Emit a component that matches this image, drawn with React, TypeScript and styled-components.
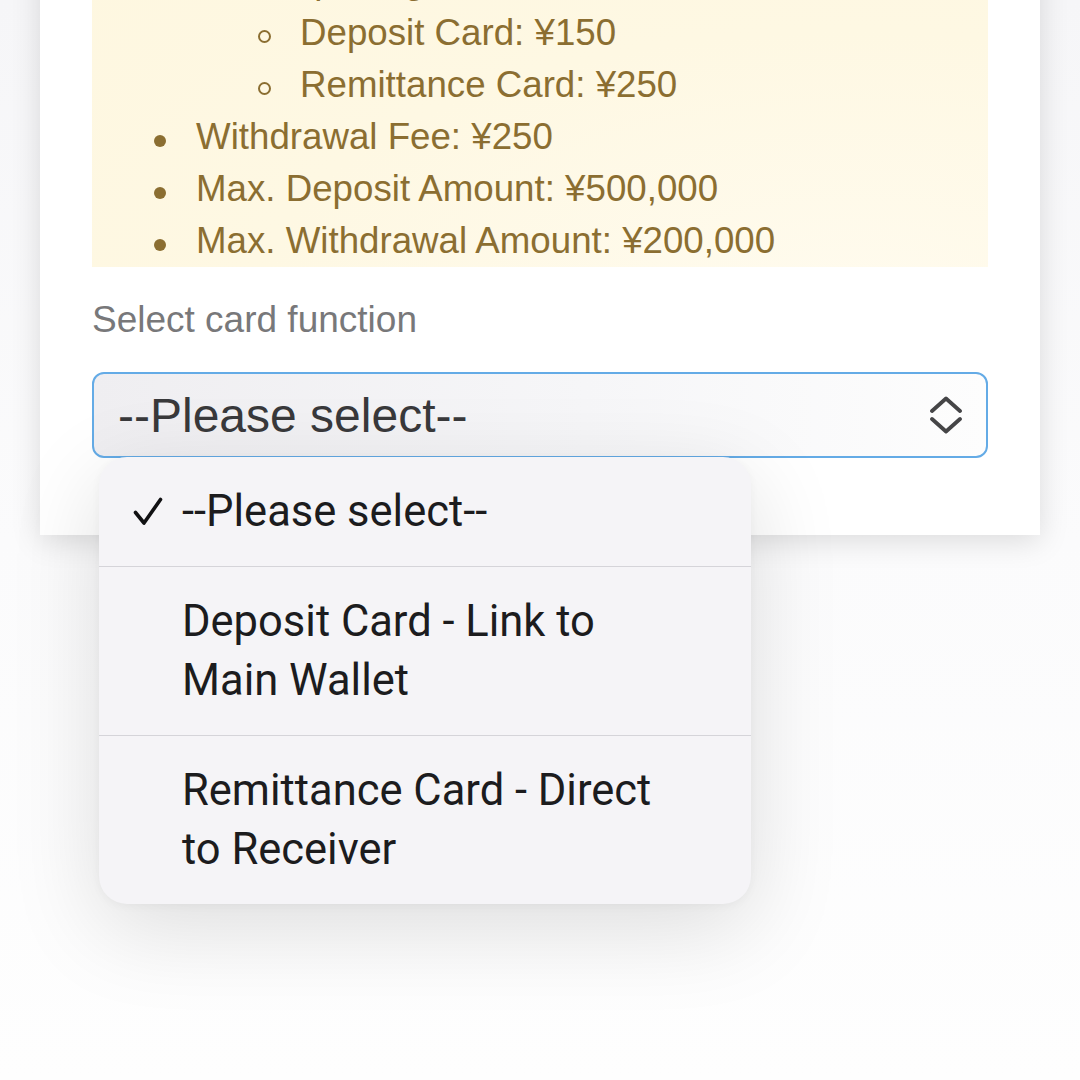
import React from 'react';
import styled, { createGlobalStyle } from 'styled-components';

// --- Global ---
const GlobalStyle = createGlobalStyle`
  html, body {
    margin: 0;
    padding: 0;
    background: #fbfbfc;
  }
  body {
    font-family: 'Liberation Sans', Arial, Helvetica, sans-serif;
    -webkit-font-smoothing: antialiased;
  }
`;

// --- Layout ---
const Screen = styled.div`
  position: relative;
  width: 1080px;
  height: 1080px;
  overflow: hidden;
  background: linear-gradient(180deg, #f6f6f8 0%, #fbfbfc 50%, #fefefe 100%);
`;

const Card = styled.div`
  margin: -45px 40px 0;
  padding: 0 52px 77px;
  background: #ffffff;
  box-shadow: 0 6px 28px rgba(0, 0, 0, 0.13);
`;

const InfoBox = styled.div`
  background: radial-gradient(ellipse at 85% 110%, #fffbee 0%, #fef8e3 55%, #fef7e0 100%);
  color: #8b6e31;
  font-size: 36.7px;
  line-height: 52px;
`;

const FeeList = styled.ul<{ $nested?: boolean }>`
  margin: 0;
  padding-left: 104px;
  list-style: none;

  & > li {
    position: relative;
  }

  & > li::before {
    content: '';
    position: absolute;
    box-sizing: border-box;
    left: ${(p) => (p.$nested ? '-42px' : '-42px')};
    top: ${(p) => (p.$nested ? '23px' : '23.5px')};
    width: ${(p) => (p.$nested ? '13px' : '12px')};
    height: ${(p) => (p.$nested ? '13px' : '12px')};
    border-radius: 50%;
    background: ${(p) => (p.$nested ? 'transparent' : '#8b6e31')};
    border: ${(p) => (p.$nested ? '2.2px solid #8b6e31' : 'none')};
  }
`;

const FieldLabel = styled.div`
  margin: 31px 0 30px;
  font-size: 37px;
  line-height: 44px;
  color: #78787a;
`;

const SelectBox = styled.div`
  box-sizing: border-box;
  height: 86px;
  display: flex;
  align-items: center;
  justify-content: space-between;
  padding: 0 23px 0 24px;
  border: 2px solid #64abe6;
  border-radius: 12px;
  background: linear-gradient(90deg, #efeef1 0%, #f6f6f8 55%, #fdfdfd 100%);
  font-size: 48px;
  color: #39393b;
`;

// --- iOS picker menu (overlay) ---
const Menu = styled.div`
  position: absolute;
  left: 99px;
  top: 457px;
  width: 652px;
  border-radius: 28px;
  background: #f5f4f7;
  box-shadow: 0 24px 90px rgba(0, 0, 0, 0.13), 0 2px 10px rgba(0, 0, 0, 0.04);
  overflow: hidden;
  font-family: Roboto, 'Liberation Sans', sans-serif;
`;

const MenuItem = styled.div`
  display: grid;
  grid-template-columns: 83px 1fr;
  padding: 25px 79px 25px 0;
  font-size: 43.5px;
  line-height: 59px;
  color: #1c1c1e;

  & + & {
    border-top: 1px solid #d5d4d9;
  }
`;

const CheckSlot = styled.div`
  display: flex;
  align-items: center;
  height: 59px;
  padding-left: 34px;
`;

const Chevrons = () => (
  <svg width="34" height="38" viewBox="0 0 34 38" fill="none">
    <path d="M3 15 L17 2.5 L31 15" stroke="#454547" strokeWidth="3.8" strokeLinecap="round" strokeLinejoin="round" />
    <path d="M3 23 L17 35.5 L31 23" stroke="#454547" strokeWidth="3.8" strokeLinecap="round" strokeLinejoin="round" />
  </svg>
);

const Check = () => (
  <svg width="30" height="29" viewBox="0 0 30 29" fill="none">
    <path d="M2.5 15.5 L11 26 L27.5 2.5" stroke="#111113" strokeWidth="3.6" strokeLinecap="round" strokeLinejoin="round" />
  </svg>
);

const options = [
  '--Please select--',
  'Deposit Card - Link to Main Wallet',
  'Remittance Card - Direct to Receiver',
];

const App = () => {
  const selected = 0;

  return (
    <>
      <GlobalStyle />
      <Screen>
        <Card>
          <InfoBox>
            <FeeList>
              <li>
                Card Opening Fee:
                <FeeList $nested>
                  <li>Deposit Card: ¥150</li>
                  <li>Remittance Card: ¥250</li>
                </FeeList>
              </li>
              <li>Withdrawal Fee: ¥250</li>
              <li>Max. Deposit Amount: ¥500,000</li>
              <li>Max. Withdrawal Amount: ¥200,000</li>
            </FeeList>
          </InfoBox>

          <FieldLabel>Select card function</FieldLabel>
          <SelectBox>
            <span>{options[selected]}</span>
            <Chevrons />
          </SelectBox>
        </Card>

        <Menu>
          {options.map((opt, i) => (
            <MenuItem key={opt}>
              <CheckSlot>{i === selected && <Check />}</CheckSlot>
              <span>{opt}</span>
            </MenuItem>
          ))}
        </Menu>
      </Screen>
    </>
  );
};

export default App;
